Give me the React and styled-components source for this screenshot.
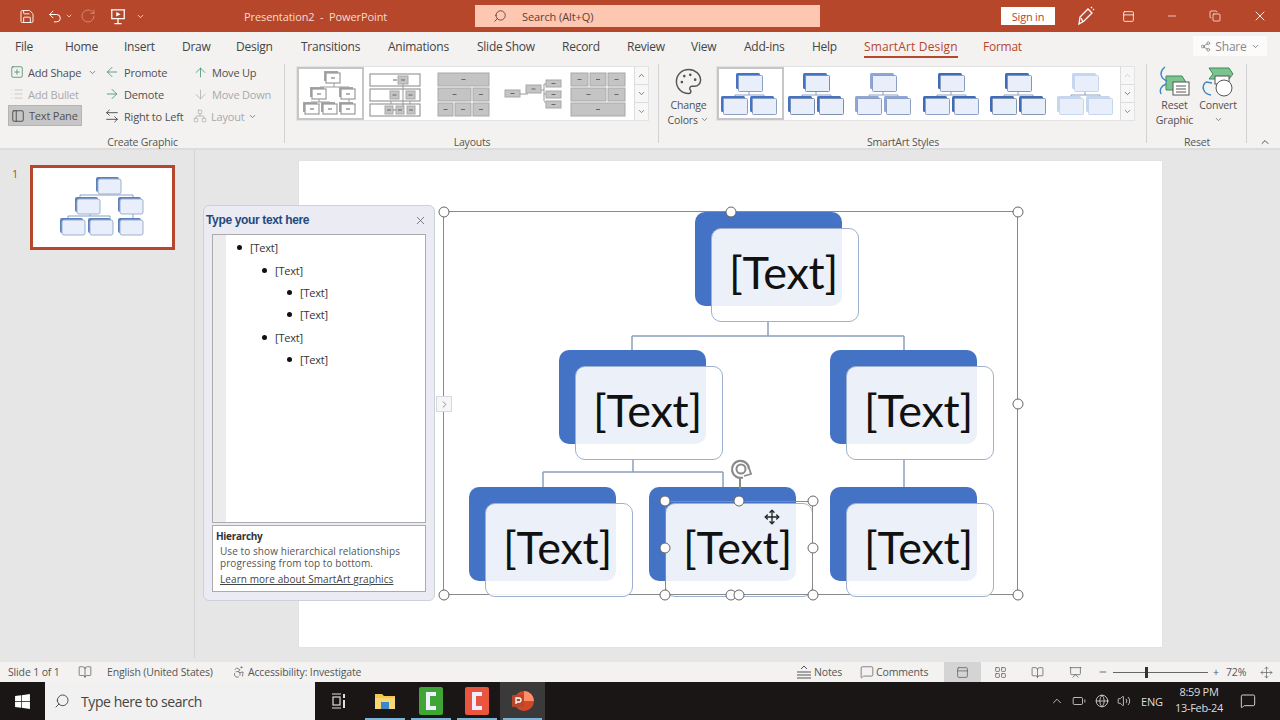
import React from 'react';
import styled, { createGlobalStyle } from 'styled-components';
import { FaWindows } from 'react-icons/fa';
import {
  Save, Undo2, RotateCw, Search, X, Minus, ChevronDown, ChevronUp, ChevronRight, Share2, Move,
  ArrowLeft, ArrowRight, ArrowUp, ArrowDown, ArrowLeftRight, SquarePlus, List, PanelLeft,
  Network, Palette, BookOpen, Accessibility, MessageSquare, LayoutGrid, Presentation, Volume2, Globe, Battery, PanelTop, Copy,
} from 'lucide-react';

const UI = '"Open Sans", "Noto Sans", sans-serif';

const Global = createGlobalStyle`
  html, body { margin: 0; padding: 0; width: 1280px; height: 720px; overflow: hidden; background: #e6e6e6; }
  * { box-sizing: border-box; }
  body { font-family: ${UI}; }
`;

const Page = styled.div`
  width: 1280px; height: 720px; display: flex; flex-direction: column; overflow: hidden;
`;

/* Title bar */
const TitleBar = styled.header`
  height: 32px; flex: none; background: #b7472a; color: #fff; display: flex; align-items: center; position: relative;
`;
const QuickSlot = styled.span`
  width: ${p => p.$w}px; flex: none; display: flex; justify-content: center; align-items: center; opacity: ${p => p.$dim ? 0.35 : 1};
`;
const TitleText = styled.div`
  width: 231px; flex: none; font-size: 11px; color: #f6dcd3; letter-spacing: -.1px;
`;
const SearchBox = styled.div`
  width: 345px; height: 22px; flex: none; background: #fdc7b1; display: flex; align-items: center; gap: 15px; padding-left: 18px;
  font-size: 11px; color: #5d4037; letter-spacing: -.1px;
`;
const SignIn = styled.div`
  width: 54px; height: 18px; flex: none; margin-left: 181px; background: #fff; color: #b7472a; font-size: 11px;
  display: flex; align-items: center; justify-content: center; margin-right: 9px; letter-spacing: -.2px;
`;

/* Tabs */
const Tabs = styled.nav`
  height: 28px; flex: none; background: #f3f2f1; display: flex; align-items: center; padding-left: 15px; position: relative;
`;
const Tab = styled.div`
  width: ${p => p.$w}px; flex: none; font-size: 12px; color: ${p => p.$accent ? '#b7472a' : '#444'}; letter-spacing: -.25px; white-space: nowrap;
`;
const TabText = styled.span`
  display: inline-block; position: relative; letter-spacing: .15px;
  &::after { content: ''; position: absolute; left: 0; right: 0; bottom: -3px; height: 2px; background: #b7472a; }
`;
const ShareBtn = styled.div`
  position: absolute; left: 1193px; top: 4px; width: 74px; height: 20px; background: #fbfbfb; color: #888; font-size: 12px;
  display: flex; align-items: center; justify-content: center; gap: 4px; letter-spacing: -.2px;
`;

/* Ribbon */
const Ribbon = styled.section`
  height: 90px; flex: none; background: #f3f2f1; display: flex; border-bottom: 2px solid #dcdcdc; position: relative;
`;
const Group = styled.div`
  width: ${p => p.$w}px; flex: none; display: flex; flex-direction: column; position: relative;
  ${p => p.$sep && `&::after { content: ''; position: absolute; right: 0; top: 4px; bottom: 5px; width: 1px; background: #d2d2d2; }`}
`;
const GroupBody = styled.div`
  height: 71px; flex: none; display: flex;
`;
const GroupLabel = styled.div`
  text-align: center; font-size: 10.5px; color: #555; letter-spacing: -.2px; line-height: 14px; padding-top: 4px;
`;
const CommandGrid = styled.div`
  display: grid; grid-template-columns: 94px 89px 90px; grid-auto-rows: 22px; padding: 1px 0 0 8px;
`;
const Command = styled.div`
  display: flex; align-items: center; gap: 4px; font-size: 11px; letter-spacing: -.2px; white-space: nowrap; padding-left: 2px;
  color: ${p => p.$off ? '#a9a9a9' : '#505050'};
  ${p => p.$on && `background: #c6c6c6; width: 74px; height: 21px; border: 1px solid #b5b5b5;`}
`;
const Chevron = styled.span`
  display: flex; margin-left: 3px;
`;
const Gallery = styled.div`
  height: 55px; flex: none; display: flex; background: #fff; margin-top: 6px; margin-left: ${p => p.$ml}px; width: ${p => p.$w}px;
  border: 1px solid #e3e3e3; justify-content: space-between;
`;
const ThumbRow = styled.div`
  flex: 1; display: flex; justify-content: space-between;
`;
const Thumb = styled.div`
  width: 67px; height: 53px; flex: none;
  ${p => p.$sel && `background: #fff; outline: 2px solid #c6c6c6; outline-offset: -2px;`}
  svg { display: block; }
`;
const Scroller = styled.div`
  width: 14px; flex: none; display: flex; flex-direction: column; border-left: 1px solid #dcdcdc; background: #f7f7f7;
`;
const ScrollBtn = styled.div`
  flex: 1; display: flex; align-items: center; justify-content: center; color: ${p => p.$off ? '#c0c0c0' : '#555'};
  border-bottom: 1px solid #dcdcdc; &:last-child { border-bottom: 0; }
`;
const Big = styled.div`
  width: ${p => p.$w}px; flex: none; display: flex; flex-direction: column; align-items: center; padding-top: 5px; font-size: 10.5px;
  color: #505050; line-height: 15px; letter-spacing: -.15px; text-align: center; white-space: nowrap; margin-left: ${p => p.$ml || 0}px;
`;
const BigIcon = styled.div`
  height: 33px; display: flex; align-items: center; justify-content: center;
`;
const Collapse = styled.div`
  position: absolute; left: 1259px; top: 76px; color: #555; display: flex;
`;

/* Main */
const Main = styled.main`
  flex: 1; display: flex; background: #e6e6e6; min-height: 0;
`;
const ThumbPane = styled.aside`
  width: 195px; flex: none; border-right: 1px solid #d6d6d6; display: flex; gap: 11px; padding: 15px 0 0 12px; margin-bottom: 4px;
`;
const SlideNo = styled.div`
  font-size: 11px; color: #b7472a; width: 7px; line-height: 15px; padding-top: 1px;
`;
const SlideThumb = styled.div`
  width: 145px; height: 85px; border: 3px solid #b7472a; background: #fff; display: flex; align-items: center; justify-content: center;
`;
const Workspace = styled.div`
  flex: 1; position: relative; padding: 11px 0 0 104px;
`;
const Slide = styled.div`
  width: 863px; height: 486px; background: #fff; position: relative; box-shadow: 0 0 1px #ccc;
`;

/* Diagram */
const Frame = styled.div`
  position: absolute; left: 144px; top: 50px; width: 575px; height: 384px; border: 1.5px solid #8a8a8a;
`;
const Lines = styled.svg`
  position: absolute; left: 0; top: 0; overflow: visible;
`;
const NodeBack = styled.div`
  position: absolute; left: ${p => p.$x}px; top: ${p => p.$y}px; width: 147px; height: 94px; background: #4472c4; border-radius: 10px;
`;
const NodeFront = styled.div`
  position: absolute; left: 16px; top: 16px; width: 148px; height: 94px; border-radius: 10px; background: rgba(255,255,255,.9);
  border: 1px solid #9db0cf; display: flex; align-items: center; justify-content: center; padding: 0 3px 7px 0;
  font-family: Lato, "Open Sans", sans-serif; font-size: 45px; color: #111; letter-spacing: -.3px;
`;
const Handle = styled.span`
  position: absolute; left: ${p => p.$x}px; top: ${p => p.$y}px; width: 11px; height: 11px; border-radius: 50%; background: #fff;
  border: 1.5px solid #666; transform: translate(-50%, -50%); z-index: 3;
`;
const NodeSel = styled.div`
  position: absolute; left: 221px; top: 289px; width: 148px; height: 94px; border: 1.5px solid #8a8a8a; z-index: 2;
`;
const Rotate = styled.div`
  position: absolute; left: 285px; top: 245px; display: flex; z-index: 3;
  &::after { content: ''; position: absolute; left: 10px; top: 22px; width: 1.5px; height: 10px; background: #8a8a8a; }
`;
const MoveCursor = styled.div`
  position: absolute; left: 320px; top: 297px; color: #222; display: flex; z-index: 4;
`;

/* Text pane */
const Pane = styled.div`
  position: absolute; left: 8px; top: 55px; width: 232px; height: 396px; background: #ebebf3; border: 1px solid #cdd1d8; border-radius: 6px;
  display: flex; flex-direction: column; padding: 0 8px 8px 8px; z-index: 5;
`;
const PaneHead = styled.div`
  height: 28px; flex: none; display: flex; align-items: center; justify-content: space-between; margin-left: -6px; margin-right: -1px;
  font-family: "Liberation Sans", sans-serif; font-weight: 700; font-size: 12px; color: #1f497d; letter-spacing: -.35px;
`;
const PaneBody = styled.div`
  flex: 1; background: #fff; border: 1.5px solid #ababab; display: flex; min-height: 0; margin-bottom: 2px;
`;
const PaneStrip = styled.div`
  width: 13px; flex: none; background: #ececec;
`;
const Outline = styled.ul`
  list-style: none; margin: 0; padding: 1.5px 0 0 0; flex: 1;
`;
const OutlineItem = styled.li`
  height: 22.4px; display: flex; align-items: center; gap: 8px; padding-left: ${p => 11 + p.$lvl * 25}px; font-size: 11px; color: #333; letter-spacing: -.2px;
  &::before { content: ''; width: 5px; height: 5px; border-radius: 50%; background: #111; flex: none; }
`;
const Desc = styled.div`
  height: 67px; flex: none; background: #fff; border: 1.5px solid #ababab; padding: 4px 3px 0 3px; font-size: 10px; color: #555; line-height: 12px; letter-spacing: .08px;
`;
const DescTitle = styled.div`
  font-weight: 700; color: #333; line-height: 13px; margin-bottom: 2px; letter-spacing: -.3px;
`;
const DescText = styled.div`
  padding-left: 4px; margin-top: 2px;
`;
const DescLink = styled.div`
  padding-left: 4px; margin-top: 4px; text-decoration: underline; color: #444;
`;
const PaneTab = styled.div`
  position: absolute; left: 137px; top: 235px; width: 16px; height: 16px; background: #f6f6f8; border: 1px solid #d8d8de; color: #888;
  display: flex; align-items: center; justify-content: center; z-index: 4;
`;

/* Status */
const Status = styled.footer`
  height: 20px; flex: none; background: #f3f2f1; display: flex; align-items: center; font-size: 10.5px; color: #555; letter-spacing: -.15px; position: relative; padding-left: 8px;
`;
const StatusItem = styled.div`
  display: flex; align-items: center; gap: 2px; white-space: nowrap; margin-left: ${p => p.$ml || 0}px; width: ${p => p.$w ? p.$w + 'px' : 'auto'};
  ${p => p.$center && 'justify-content: center;'}
  ${p => p.$on && 'background: #d4d4d4; height: 20px;'}
`;
const Slider = styled.div`
  width: 95px; height: 1px; background: #666; position: relative; margin: 0 3px;
  &::after { content: ''; position: absolute; left: 32px; top: -5px; width: 3px; height: 11px; background: #333; }
`;

/* Taskbar */
const Taskbar = styled.div`
  height: 38px; flex: none; background: #1a1616; display: flex; align-items: center; color: #eee;
`;
const StartBtn = styled.div`
  width: 45px; height: 38px; flex: none; display: flex; align-items: center; justify-content: center; color: #fff;
`;
const TaskSearch = styled.div`
  width: 270px; height: 38px; flex: none; background: #f1f1f1; display: flex; align-items: center; gap: 11px; padding-left: 9px;
  font-size: 14px; color: #444; letter-spacing: -.42px;
`;
const TaskSlot = styled.div`
  width: ${p => p.$w}px; height: 38px; flex: none; display: flex; align-items: center; justify-content: center; position: relative;
  ${p => p.$on && 'background: #3a3a3a;'}
  ${p => p.$bar && `&::after { content: ''; position: absolute; left: 3px; right: 3px; bottom: 0; height: 2px; background: #7cb4d8; }`}
`;
const Tray = styled.div`
  margin-left: auto; display: flex; align-items: center; height: 38px; color: #ddd; padding-right: 14px;
`;
const TraySlot = styled.div`
  width: ${p => p.$w}px; display: flex; justify-content: center; align-items: center; font-size: 11px; letter-spacing: -.2px;
`;
const Clock = styled.div`
  width: 62px; display: flex; flex-direction: column; align-items: center; font-size: 11px; line-height: 16px; letter-spacing: -.3px; margin-top: -2px; white-space: nowrap;
`;

/* Drawings */
const GB = ({ x, y, w, h, dash = true }) => (
  <g>
    <rect x={x} y={y} width={w} height={h} fill="#fff" stroke="#9a9a9a" strokeWidth="1.2" />
    {dash && <line x1={x + w / 2 - 2} x2={x + w / 2 + 2} y1={y + h / 2} y2={y + h / 2} stroke="#666" />}
  </g>
);
const GF = ({ x, y, w, h }) => (
  <g>
    <rect x={x} y={y} width={w} height={h} fill="#c4c4c4" stroke="#a8a8a8" />
    <line x1={x + w / 2 - 2} x2={x + w / 2 + 2} y1={y + h / 2} y2={y + h / 2} stroke="#666" />
  </g>
);
const LayoutHierarchy = () => (
  <svg width="67" height="53">
    <path d="M37 15V20M23 20H52V22M23 20V22M22 32V35M14 35H33M14 35V37M33 35V37M52 32V37" stroke="#999" fill="none" />
    {[[27, 4], [13, 20], [42, 20], [6, 35], [24, 35], [42, 35]].map(([x, y]) => (
      <g key={x + '-' + y}><rect x={x} y={y} width="14" height="10" fill="#a5a5a5" /><GB x={x + 2} y={y + 2} w={14} h={10} /></g>
    ))}
  </svg>
);
const LayoutLabeled = () => (
  <svg width="67" height="53">
    <GB x={5} y={7} w={50} h={12} /><GB x={5} y={22} w={50} h={12} /><GB x={5} y={37} w={50} h={12} />
    <path d="M38 17V40M26 34V37M45 34V37" stroke="#999" />
    <GF x={33} y={9} w={10} h={8} /><GF x={25} y={24} w={9} h={8} /><GF x={41} y={24} w={9} h={8} />
    <GF x={20} y={39} w={8} h={8} /><GF x={31} y={39} w={8} h={8} /><GF x={42} y={39} w={8} h={8} />
  </svg>
);
const LayoutBlocks = () => (
  <svg width="67" height="53">
    <GF x={6} y={6} w={51} h={13} /><GF x={6} y={21} w={33} h={13} /><GF x={41} y={21} w={16} h={13} />
    <GF x={6} y={36} w={15} h={13} /><GF x={23} y={36} w={16} h={13} /><GF x={41} y={36} w={16} h={13} />
  </svg>
);
const LayoutHoriz = () => (
  <svg width="67" height="53">
    <path d="M20 27H28M40 23H44M44 17V34M44 17H46M44 27H46M44 35H46" stroke="#999" fill="none" />
    <GF x={5} y={23} w={15} h={7} /><GF x={26} y={18} w={15} h={8} />
    <GF x={46} y={13} w={15} h={7} /><GF x={46} y={24} w={15} h={7} /><GF x={46} y={34} w={15} h={7} />
  </svg>
);
const LayoutBlocks2 = () => (
  <svg width="67" height="53">
    <GF x={4} y={6} w={17} h={13} /><GF x={23} y={6} w={16} h={13} /><GF x={41} y={6} w={17} h={13} />
    <GF x={4} y={21} w={35} h={13} /><GF x={41} y={21} w={17} h={13} />
    <GF x={4} y={36} w={54} h={13} />
  </svg>
);
const MiniNode = ({ x, y, back, front, stroke }) => (
  <g>
    <rect x={x} y={y} width="24" height="16" rx="1.5" fill={back} />
    <rect x={x + 2.5} y={y + 2.5} width="24" height="16" rx="1" fill={front} stroke={stroke} strokeWidth="1" />
  </g>
);
const StyleThumb = ({ back = '#4472c4', front = '#e9effa', stroke = '#8a9fc2' }) => (
  <svg width="67" height="53">
    <path d="M32 25V28M18 28H47M18 28V30M47 28V30" stroke="#8a9fc2" fill="none" />
    <MiniNode x={19} y={6} back={back} front={front} stroke={stroke} />
    <MiniNode x={4} y={29} back={back} front={front} stroke={stroke} />
    <MiniNode x={33} y={29} back={back} front={front} stroke={stroke} />
  </svg>
);
const MiniChart = () => (
  <svg width="90" height="70" viewBox="0 0 90 70">
    <path d="M51 19V22M22 22H75M22 22V25M75 22V25M32 39V43M10 43H52M10 43V45M52 43V45M75 39V45" stroke="#8a9fc2" fill="none" />
    {[[38, 4], [17, 24], [60, 24], [2, 45], [30, 45], [60, 45]].map(([x, y]) => (
      <g key={x + '-' + y}>
        <rect x={x} y={y} width="23" height="15" rx="2" fill="#5b7fb8" />
        <rect x={x + 2} y={y + 2} width="23" height="15" rx="2" fill="#e9effa" stroke="#9db0cf" />
      </g>
    ))}
  </svg>
);
const ResetIcon = () => (
  <svg width="34" height="32" viewBox="0 0 34 32" fill="none">
    <path d="M8 10L24 10L29 18L24 24H8Z" fill="#7cc48f" stroke="#3f8a58" />
    <rect x="15" y="16" width="16" height="13" fill="#fff" stroke="#555" />
    <path d="M18 20H28M18 23H28M18 26H28" stroke="#555" />
    <path d="M7 1C1 6 2 12 9 15" stroke="#3f87c8" strokeWidth="1.5" />
    <path d="M3 28C1 24 3 20 8 18" stroke="#3f87c8" strokeWidth="1.5" />
  </svg>
);
const ConvertIcon = () => (
  <svg width="34" height="32" viewBox="0 0 34 32" fill="none">
    <path d="M8 2H28L32 8L28 13H8L12 8Z" fill="#7cc48f" stroke="#3f8a58" />
    <rect x="14" y="10" width="14" height="8" fill="#fff" stroke="#555" />
    <circle cx="23" cy="22" r="8" fill="#fff" stroke="#555" />
    <path d="M5 16C0 20 2 28 10 29M11 17L5 16" stroke="#3f87c8" strokeWidth="1.5" />
  </svg>
);
const PenIcon = () => (
  <svg width="18" height="20" viewBox="0 0 18 20" fill="none" stroke="#fff" strokeWidth="1.3">
    <path d="M2 18L3 11L11 3L15 7L7 15Z" />
    <path d="M4 12L6 16M14 2L15 1M16 4L17 3" />
  </svg>
);
const PresentIcon = () => (
  <svg width="18" height="19" viewBox="0 0 18 19" fill="none" stroke="#fff" strokeWidth="1.4">
    <path d="M2 2H16V12H2ZM1 2H17M9 12V17M5 17.5H13" />
    <path d="M7 4.5L12 7L7 9.5Z" fill="#fff" stroke="none" />
  </svg>
);
const RotateHandle = () => (
  <svg width="24" height="24" viewBox="0 0 24 24" fill="none" stroke="#8a8a8a">
    <path d="M20 12A8.5 8.5 0 1 0 14 20.5" strokeWidth="2.2" />
    <circle cx="12" cy="12" r="4.5" strokeWidth="2" />
    <path d="M15 19L22 17L20 11" strokeWidth="1.8" />
  </svg>
);
const NotesIcon = () => (
  <svg width="16" height="14" viewBox="0 0 16 14" fill="none" stroke="#555">
    <path d="M5 4L8 1L11 4M1 7H15M1 10H15M1 13H15" />
  </svg>
);
const TaskViewIcon = () => (
  <svg width="14" height="16" viewBox="0 0 14 16" fill="none" stroke="#ddd" strokeWidth="1.2">
    <path d="M0 1H9M0 15H9" />
    <rect x="1" y="4" width="7" height="8" />
    <path d="M12 1V5M12 7V15" strokeWidth="2" />
  </svg>
);
const FolderIcon = () => (
  <svg width="22" height="20" viewBox="0 0 22 20">
    <path d="M1 3H8L10 5H21V18H1Z" fill="#f2c94c" />
    <rect x="1" y="7" width="20" height="11" fill="#f7d774" />
    <rect x="7" y="11" width="8" height="7" fill="#3f87c8" />
  </svg>
);
const AppC = ({ bg }) => (
  <svg width="24" height="28" viewBox="0 0 24 28">
    <rect width="24" height="28" rx="2" fill={bg} />
    <path d="M17 7H9V21H17" fill="none" stroke="#eef" strokeWidth="4" />
  </svg>
);
const PptIcon = () => (
  <svg width="24" height="24" viewBox="0 0 24 24">
    <circle cx="13" cy="12" r="10" fill="#d24726" />
    <path d="M13 2A10 10 0 0 1 23 12H13Z" fill="#ff8f6b" />
    <rect x="1" y="6" width="12" height="12" rx="1" fill="#b7472a" />
    <path d="M5 15V9H8A2 2 0 0 1 8 13H5" fill="none" stroke="#fff" strokeWidth="1.3" />
  </svg>
);
const ChevSmall = () => <ChevronDown size={9} strokeWidth={2} color="#666" />;

const tabs = [
  ['File', 50], ['Home', 59], ['Insert', 58], ['Draw', 54], ['Design', 65], ['Transitions', 87], ['Animations', 89],
  ['Slide Show', 85], ['Record', 65], ['Review', 64], ['View', 53], ['Add-ins', 68], ['Help', 52],
];
const outline = [0, 1, 2, 2, 1, 2];
const nodes = [[251, 0], [115, 138], [386, 138], [25, 275], [205, 275], [386, 275]];
const handles = [
  [0, 0], [287, 0], [574, 0], [0, 192], [574, 192], [0, 383], [287, 383], [574, 383],
  [221, 289], [295, 289], [369, 289], [221, 336], [369, 336], [221, 383], [295, 383], [369, 383],
];

export default function App() {
  return (
    <Page>
      <Global />
      <TitleBar>
        <QuickSlot $w={19} />
        <QuickSlot $w={16}><Save size={17} strokeWidth={1.4} /></QuickSlot>
        <QuickSlot $w={12} />
        <QuickSlot $w={16}><Undo2 size={17} strokeWidth={1.5} /></QuickSlot>
        <QuickSlot $w={12}><ChevronDown size={8} /></QuickSlot>
        <QuickSlot $w={25} $dim><RotateCw size={16} strokeWidth={1.5} /></QuickSlot>
        <QuickSlot $w={10} />
        <QuickSlot $w={16}><PresentIcon /></QuickSlot>
        <QuickSlot $w={28}><ChevronDown size={9} /></QuickSlot>
        <QuickSlot $w={90} />
        <TitleText>Presentation2 &nbsp;-&nbsp; PowerPoint</TitleText>
        <SearchBox><Search size={14} strokeWidth={1.5} style={{ transform: 'scaleX(-1)' }} />Search (Alt+Q)</SearchBox>
        <SignIn>Sign in</SignIn>
        <QuickSlot $w={44}><PenIcon /></QuickSlot>
        <QuickSlot $w={41}><PanelTop size={13} strokeWidth={1.5} /></QuickSlot>
        <QuickSlot $w={45}><Minus size={12} strokeWidth={1.4} /></QuickSlot>
        <QuickSlot $w={41}><Copy size={12} strokeWidth={1.4} /></QuickSlot>
        <QuickSlot $w={49}><X size={16} strokeWidth={1.4} /></QuickSlot>
      </TitleBar>

      <Tabs>
        {tabs.map(([t, w]) => <Tab key={t} $w={w}>{t}</Tab>)}
        <Tab $w={119} $accent><TabText>SmartArt Design</TabText></Tab>
        <Tab $w={60} $accent>Format</Tab>
        <ShareBtn><Share2 size={11} />Share <ChevSmall /></ShareBtn>
      </Tabs>

      <Ribbon>
        <Group $w={285} $sep>
          <GroupBody>
            <CommandGrid>
              <Command><SquarePlus size={14} strokeWidth={1.2} color="#2e7d5b" />Add Shape <Chevron><ChevSmall /></Chevron></Command>
              <Command><ArrowLeft size={16} strokeWidth={1.2} color="#3c8a6d" />Promote</Command>
              <Command><ArrowUp size={15} strokeWidth={1.2} color="#3c8a6d" />Move Up</Command>
              <Command $off><List size={14} strokeWidth={1.2} color="#bbb" />Add Bullet</Command>
              <Command><ArrowRight size={16} strokeWidth={1.2} color="#3c8a6d" />Demote</Command>
              <Command $off><ArrowDown size={15} strokeWidth={1.2} color="#aaa" />Move Down</Command>
              <Command $on><PanelLeft size={14} strokeWidth={1.3} color="#333" />Text Pane</Command>
              <Command><ArrowLeftRight size={16} strokeWidth={1.2} color="#333" />Right to Left</Command>
              <Command $off><Network size={14} strokeWidth={1.2} color="#aaa" />Layout <ChevSmall /></Command>
            </CommandGrid>
          </GroupBody>
          <GroupLabel>Create Graphic</GroupLabel>
        </Group>

        <Group $w={374} $sep>
          <GroupBody>
            <Gallery $ml={11} $w={353}>
              <ThumbRow>
                <Thumb $sel><LayoutHierarchy /></Thumb>
                <Thumb><LayoutLabeled /></Thumb>
                <Thumb><LayoutBlocks /></Thumb>
                <Thumb><LayoutHoriz /></Thumb>
                <Thumb><LayoutBlocks2 /></Thumb>
              </ThumbRow>
              <Scroller>
                <ScrollBtn><ChevronUp size={9} /></ScrollBtn>
                <ScrollBtn><ChevronDown size={9} /></ScrollBtn>
                <ScrollBtn><ChevSmall /></ScrollBtn>
              </Scroller>
            </Gallery>
          </GroupBody>
          <GroupLabel>Layouts</GroupLabel>
        </Group>

        <Group $w={488} $sep>
          <GroupBody>
            <Big $w={55} $ml={2}>
              <BigIcon><Palette size={29} strokeWidth={1.2} color="#555" /></BigIcon>
              <span>Change</span>
              <span>Colors <ChevSmall /></span>
            </Big>
            <Gallery $ml={0} $w={419}>
              <ThumbRow>
                <Thumb $sel><StyleThumb /></Thumb>
                <Thumb><StyleThumb stroke="#7a8fae" /></Thumb>
                <Thumb><StyleThumb back="#8ea6d6" stroke="#8a9fc2" /></Thumb>
                <Thumb><StyleThumb back="#3f6cb8" /></Thumb>
                <Thumb><StyleThumb back="#3f6cb8" stroke="#8496b4" /></Thumb>
                <Thumb><StyleThumb back="#c5d6f0" stroke="#c7d6ec" /></Thumb>
              </ThumbRow>
              <Scroller>
                <ScrollBtn $off><ChevronUp size={9} /></ScrollBtn>
                <ScrollBtn><ChevronDown size={9} /></ScrollBtn>
                <ScrollBtn><ChevSmall /></ScrollBtn>
              </Scroller>
            </Gallery>
          </GroupBody>
          <GroupLabel>SmartArt Styles</GroupLabel>
        </Group>

        <Group $w={100} $sep>
          <GroupBody>
            <Big $w={55}>
              <BigIcon><ResetIcon /></BigIcon>
              <span>Reset</span>
              <span>Graphic</span>
            </Big>
            <Big $w={32}>
              <BigIcon><ConvertIcon /></BigIcon>
              <span>Convert</span>
              <span><ChevSmall /></span>
            </Big>
          </GroupBody>
          <GroupLabel>Reset</GroupLabel>
        </Group>
        <Collapse><ChevronUp size={12} /></Collapse>
      </Ribbon>

      <Main>
        <ThumbPane>
          <SlideNo>1</SlideNo>
          <SlideThumb><MiniChart /></SlideThumb>
        </ThumbPane>
        <Workspace>
          <Slide>
            <Frame>
              <Lines width="574" height="383">
                <path d="M324 110V124M188 124H460M188 124V138M460 124V138M189 247V260M99 260H279M99 260V275M279 260V275M460 247V275" stroke="#8da0bd" strokeWidth="1.5" fill="none" />
              </Lines>
              {nodes.map(([x, y]) => (
                <NodeBack key={x + '-' + y} $x={x} $y={y}><NodeFront>[Text]</NodeFront></NodeBack>
              ))}
              <NodeSel />
              {handles.map(([x, y]) => <Handle key={x + '-' + y} $x={x} $y={y} />)}
              <Rotate><RotateHandle /></Rotate>
              <MoveCursor><Move size={16} strokeWidth={2} /></MoveCursor>
            </Frame>
            <PaneTab><ChevronRight size={11} /></PaneTab>
          </Slide>
          <Pane>
            <PaneHead>Type your text here<X size={13} strokeWidth={1.5} color="#666" /></PaneHead>
            <PaneBody>
              <PaneStrip />
              <Outline>
                {outline.map((lvl, i) => <OutlineItem key={i} $lvl={lvl}>[Text]</OutlineItem>)}
              </Outline>
            </PaneBody>
            <Desc>
              <DescTitle>Hierarchy</DescTitle>
              <DescText>Use to show hierarchical relationships<br />progressing from top to bottom.</DescText>
              <DescLink>Learn more about SmartArt graphics</DescLink>
            </Desc>
          </Pane>
        </Workspace>
      </Main>

      <Status>
        <StatusItem $w={70}>Slide 1 of 1</StatusItem>
        <StatusItem $w={29}><BookOpen size={14} strokeWidth={1.2} /></StatusItem>
        <StatusItem $w={125}>English (United States)</StatusItem>
        <StatusItem $w={150}><Accessibility size={14} strokeWidth={1.2} />Accessibility: Investigate</StatusItem>
        <StatusItem $ml={414} $w={64}><NotesIcon />Notes</StatusItem>
        <StatusItem $w={84}><MessageSquare size={14} strokeWidth={1.2} />Comments</StatusItem>
        <StatusItem $on $w={37} $center><PanelTop size={13} strokeWidth={1.3} /></StatusItem>
        <StatusItem $w={38} $center><LayoutGrid size={13} strokeWidth={1.3} /></StatusItem>
        <StatusItem $w={37} $center><BookOpen size={13} strokeWidth={1.3} /></StatusItem>
        <StatusItem $w={38} $center><Presentation size={13} strokeWidth={1.3} /></StatusItem>
        <StatusItem $ml={4} $w={128}><Minus size={10} /><Slider /><span>+</span></StatusItem>
        <StatusItem $w={34}>72%</StatusItem>
        <StatusItem $w={14}><Move size={13} strokeWidth={1.2} /></StatusItem>
      </Status>

      <Taskbar>
        <StartBtn><FaWindows size={17} /></StartBtn>
        <TaskSearch><Search size={16} strokeWidth={1.4} style={{ transform: 'scaleX(-1)' }} />Type here to search</TaskSearch>
        <TaskSlot $w={47}><TaskViewIcon /></TaskSlot>
        <TaskSlot $w={46} $bar><FolderIcon /></TaskSlot>
        <TaskSlot $w={46} $bar><AppC bg="#3fa535" /></TaskSlot>
        <TaskSlot $w={46} $bar><AppC bg="#e8563f" /></TaskSlot>
        <TaskSlot $w={45} $on $bar><PptIcon /></TaskSlot>
        <Tray>
          <TraySlot $w={18}><ChevronUp size={14} strokeWidth={1.4} /></TraySlot>
          <TraySlot $w={26}><Battery size={14} strokeWidth={1.4} /></TraySlot>
          <TraySlot $w={20}><Globe size={14} strokeWidth={1.4} /></TraySlot>
          <TraySlot $w={24}><Volume2 size={14} strokeWidth={1.4} /></TraySlot>
          <TraySlot $w={32}>ENG</TraySlot>
          <Clock><span>8:59 PM</span><span>13-Feb-24</span></Clock>
          <TraySlot $w={36}><MessageSquare size={16} strokeWidth={1.4} /></TraySlot>
        </Tray>
      </Taskbar>
    </Page>
  );
}
